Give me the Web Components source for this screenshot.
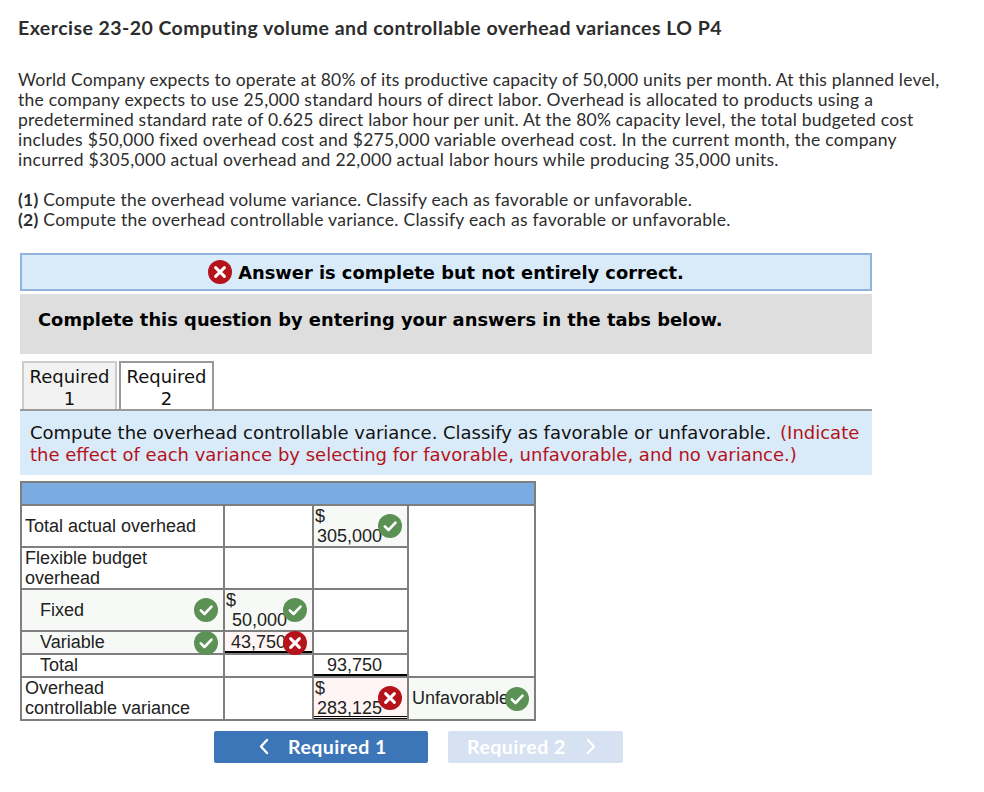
<!DOCTYPE html>
<html lang="en">
<head>
<meta charset="UTF-8">
<title>Exercise 23-20</title>
<style>
body { margin: 0; background: #fff; overflow: hidden; }
</style>
</head>
<body>
<exercise-page>
  <exercise-text slot="intro"></exercise-text>
  <alert-banner slot="banner">Answer is complete but not entirely correct.</alert-banner>
  <tab-strip slot="tabs"></tab-strip>
  <variance-table slot="table"></variance-table>
  <nav-buttons slot="nav"></nav-buttons>
</exercise-page>

<script>
  class StatusIcon extends HTMLElement {
    constructor() {
      super();
      const shadow = this.attachShadow({ mode: 'open' });
      const size = this.getAttribute('size') || 24;
      const ok = this.getAttribute('kind') === 'ok';
      const mark = ok
        ? '<path d="M6.8 12.4l3.7 3.6 7-7.4" fill="none" stroke="#fff" stroke-width="2.6" stroke-linecap="round" stroke-linejoin="round"/>'
        : '<path d="M7.6 7.6l8.8 8.8M16.4 7.6l-8.8 8.8" fill="none" stroke="#fff" stroke-width="3" stroke-linecap="round"/>';
      shadow.innerHTML = `
        <style>:host { display: inline-block; width: ${size}px; height: ${size}px; line-height: 0; } svg { display: block; }</style>
        <svg width="${size}" height="${size}" viewBox="0 0 24 24"><circle cx="12" cy="12" r="12" fill="${ok ? '#5b9155' : '#b5121b'}"/>${mark}</svg>`;
    }
  }
  customElements.define('status-icon', StatusIcon);

  class ExercisePage extends HTMLElement {
    constructor() {
      super();
      this.attachShadow({ mode: 'open' }).innerHTML = `
        <style>
          :host { display: block; width: 984px; height: 792px; box-sizing: border-box; padding: 17px 0 0 20px; }
          .stack { display: flex; flex-direction: column; width: 852px; }
          ::slotted([slot=banner]) { margin-top: 23px; }
          ::slotted([slot=table]) { margin-top: 6px; }
          ::slotted([slot=nav]) { margin-top: 10px; }
        </style>
        <div class="stack">
          <slot name="intro"></slot>
          <slot name="banner"></slot>
          <slot name="tabs"></slot>
          <slot name="table"></slot>
          <slot name="nav"></slot>
        </div>`;
    }
  }
  customElements.define('exercise-page', ExercisePage);

  class ExerciseText extends HTMLElement {
    constructor() {
      super();
      const line = (s, ls) => `<span style="letter-spacing:${ls}px">${s}</span><br>`;
      this.attachShadow({ mode: 'open' }).innerHTML = `
        <style>
          :host { display: block; margin-left: -2px; width: 940px; font-family: Lato, "Open Sans", sans-serif; color: #2d2d2d; }
          h1 { margin: 0 0 31px; font-size: 19.5px; letter-spacing: .45px; line-height: 22px; font-weight: 700; white-space: nowrap; }
          p { margin: 0 0 20px; font-size: 17.5px; line-height: 20px; white-space: nowrap; }
          p:last-child { margin: 0; }
        </style>
        <h1>Exercise 23-20 Computing volume and controllable overhead variances LO P4</h1>
        <p>${line('World Company expects to operate at 80% of its productive capacity of 50,000 units per month. At this planned level,', .186)}${line('the company expects to use 25,000 standard hours of direct labor. Overhead is allocated to products using a', .25)}${line('predetermined standard rate of 0.625 direct labor hour per unit. At the 80% capacity level, the total budgeted cost', .203)}${line('includes $50,000 fixed overhead cost and $275,000 variable overhead cost. In the current month, the company', .26)}${line('incurred $305,000 actual overhead and 22,000 actual labor hours while producing 35,000 units.', .283)}</p>
        <p>${line('<b>(1)</b> Compute the overhead volume variance. Classify each as favorable or unfavorable.', .246)}${line('<b>(2)</b> Compute the overhead controllable variance. Classify each as favorable or unfavorable.', .276)}</p>`;
    }
  }
  customElements.define('exercise-text', ExerciseText);

  class AlertBanner extends HTMLElement {
    constructor() {
      super();
      this.attachShadow({ mode: 'open' }).innerHTML = `
        <style>
          :host { display: block; font-family: "DejaVu Sans", Verdana, sans-serif; font-weight: 700; color: #000; }
          .alert { height: 34px; border: 2px solid #8fb5de; background: #d9eaf8; display: flex; align-items: center; justify-content: center; gap: 6px; font-size: 17.85px; }
          .prompt { margin-top: 3px; height: 60px; background: #dedede; padding-left: 18px; font-size: 17.87px; line-height: 52px; }
        </style>
        <div class="alert"><status-icon kind="bad"></status-icon><span><slot></slot></span></div>
        <div class="prompt">Complete this question by entering your answers in the tabs below.</div>`;
    }
  }
  customElements.define('alert-banner', AlertBanner);

  class TabStrip extends HTMLElement {
    constructor() {
      super();
      this.attachShadow({ mode: 'open' }).innerHTML = `
        <style>
          :host { display: block; font-family: "DejaVu Sans", Verdana, sans-serif; color: #111; }
          .tabs { display: flex; gap: 2px; padding: 7px 0 0 2px; border-bottom: 2px solid #999; }
          .tab { box-sizing: border-box; width: 95px; height: 48px; border: 2px solid #ccc; border-bottom: 0; background: #f2f2f2; text-align: center; font-size: 18px; line-height: 22px; padding-top: 3px; }
          .tab.on { border-color: #999; background: #fff; }
          .note { background: #d9eaf8; height: 64px; box-sizing: border-box; padding: 11px 10px 0; font-size: 18px; line-height: 22px; white-space: nowrap; }
          .first { letter-spacing: -.025px; }
          .note span.warn { color: #b5121b; margin-left: 3px; }
        </style>
        <div class="tabs"><div class="tab">Required<br>1</div><div class="tab on">Required<br>2</div></div>
        <div class="note"><span class="first">Compute the overhead controllable variance. Classify as favorable or unfavorable.</span> <span class="warn">(Indicate<br>the effect of each variance by selecting for favorable, unfavorable, and no variance.)</span></div>`;
    }
  }
  customElements.define('tab-strip', TabStrip);

  class VarianceTable extends HTMLElement {
    constructor() {
      super();
      const ok = (r, t) => `<status-icon kind="ok" style="right:${r}px;top:${t}px"></status-icon>`;
      const bad = (r, t) => `<status-icon kind="bad" style="right:${r}px;top:${t}px"></status-icon>`;
      this.attachShadow({ mode: 'open' }).innerHTML = `
        <style>
          :host { display: block; width: 516px; font-family: "Liberation Sans", Arial, sans-serif; font-size: 18px; line-height: 20px; color: #222; }
          .grid { display: grid; grid-template-columns: 201px 87px 93px 125px; grid-template-rows: 21px 40px 40px 40px 21px 21px 41px; gap: 2px; padding: 2px; background: #7f7f7f; }
          .cell { position: relative; background: #fff; padding: 0 3px; white-space: nowrap; }
          .head { grid-column: 1 / -1; background: #7aace2; }
          .side { grid-column: 4; grid-row: 2 / span 5; }
          .mid { display: flex; align-items: center; }
          .ind { padding-left: 18px; }
          .ok { background: #f6f9f6; }
          .bad { background: #fef5f4; }
          .sum { border-bottom: 2px solid #000; box-sizing: border-box; }
          .dbl { border-bottom: 3px double #000; box-sizing: border-box; }
          .amt { line-height: 20px; padding-left: 1px; }
          .amt div { padding-left: 2px; line-height: 21px; }
          .amt.deep div { padding-left: 6px; }
          status-icon { position: absolute; }
        </style>
        <div class="grid">
          <div class="cell head"></div>

          <div class="cell mid">Total actual overhead</div>
          <div class="cell"></div>
          <div class="cell ok amt">$<div>305,000</div>${ok(5, 8)}</div>
          <div class="cell side"></div>

          <div class="cell">Flexible budget<br>overhead</div>
          <div class="cell"></div>
          <div class="cell"></div>

          <div class="cell ok mid ind">Fixed${ok(5, 8)}</div>
          <div class="cell ok amt deep">$<div>50,000</div>${ok(5, 8)}</div>
          <div class="cell"></div>

          <div class="cell ok mid ind" style="padding-bottom:1px">Variable${ok(5, -1)}</div>
          <div class="cell bad sum mid" style="padding:0 0 0 6px">43,750${bad(5, -1)}</div>
          <div class="cell"></div>

          <div class="cell mid ind" style="padding-bottom:1px">Total</div>
          <div class="cell"></div>
          <div class="cell sum mid" style="padding-left:13px">93,750</div>

          <div class="cell">Overhead<br>controllable variance</div>
          <div class="cell"></div>
          <div class="cell bad dbl amt">$<div>283,125</div>${bad(5, 8)}</div>
          <div class="cell ok mid" style="padding:0 0 2px 3px">Unfavorable${ok(5, 9)}</div>
        </div>`;
    }
  }
  customElements.define('variance-table', VarianceTable);

  class NavButtons extends HTMLElement {
    constructor() {
      super();
      const chev = d => `<svg width="11" height="17" viewBox="0 0 11 17"><path d="${d}" fill="none" stroke="currentColor" stroke-width="2.4" stroke-linecap="round" stroke-linejoin="round"/></svg>`;
      this.attachShadow({ mode: 'open' }).innerHTML = `
        <style>
          :host { display: flex; gap: 20px; padding-left: 194px; font-family: Lato, sans-serif; font-weight: 700; font-size: 19.5px; letter-spacing: .5px; color: #fff; }
          .btn { height: 32px; border-radius: 2px; display: flex; align-items: center; box-sizing: border-box; padding-bottom: 1px; }
          .prev { width: 214px; background: #3c76b8; padding-left: 44px; gap: 19px; }
          .next { width: 175px; background: #d6e2f1; padding-left: 19px; gap: 20px; }
        </style>
        <div class="btn prev">${chev('M9 2L3 8.5L9 15')}<span>Required 1</span></div>
        <div class="btn next"><span>Required 2</span>${chev('M2 2L8 8.5L2 15')}</div>`;
    }
  }
  customElements.define('nav-buttons', NavButtons);
</script>
</body>
</html>
